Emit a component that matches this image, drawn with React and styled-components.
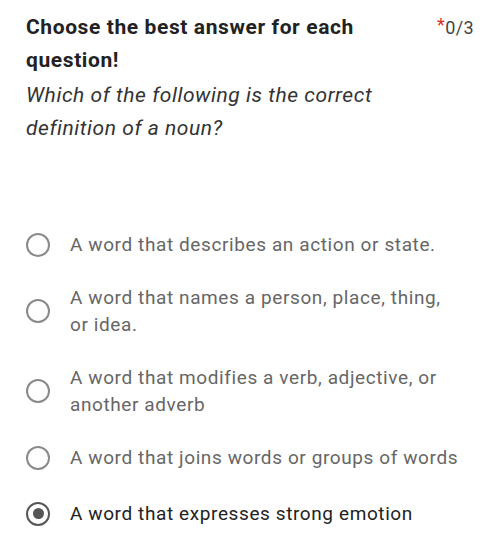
import { createGlobalStyle, styled } from "styled-components"

const GlobalStyle = createGlobalStyle`
  html, body {
    margin: 0;
    padding: 0;
    background: #ffffff;
  }
  body {
    font-family: Roboto, "Liberation Sans", Arial, sans-serif;
  }
`

const options = [
  "A word that describes an action or state.",
  "A word that names a person, place, thing, or idea.",
  "A word that modifies a verb, adjective, or another adverb",
  "A word that joins words or groups of words",
  "A word that expresses strong emotion",
]

const selected = 4

function App() {
  return (
    <>
      <GlobalStyle />
      <Card>
        <Header>
          <Title>Choose the best answer for each question!</Title>
          <Score>
            <Star>*</Star>0/3
          </Score>
        </Header>
        <Question>Which of the following is the correct definition of a noun?</Question>
        <OptionList>
          {options.map((text, i) => (
            <Option key={text} $checked={i === selected}>
              <Radio $checked={i === selected}>{i === selected && <Dot />}</Radio>
              <OptionText $checked={i === selected}>{text}</OptionText>
            </Option>
          ))}
        </OptionList>
      </Card>
    </>
  )
}

export default App

const Card = styled.div`
  width: 501px;
  height: 556px;
  box-sizing: border-box;
  padding: 11px 27px 0 26px;
  background: #ffffff;
  overflow: hidden;
`

const Header = styled.div`
  display: flex;
  justify-content: space-between;
  align-items: flex-start;
`

const Title = styled.div`
  width: 360px;
  font-size: 21px;
  font-weight: 700;
  letter-spacing: 0.6px;
  line-height: 33px;
  color: #222222;
`

const Score = styled.div`
  font-size: 18px;
  letter-spacing: 0.4px;
  line-height: 33px;
  color: #444444;
`

const Star = styled.span`
  color: #d93025;
  font-size: 18px;
  position: relative;
  top: -3px;
`

const Question = styled.div`
  width: 380px;
  margin-top: 2px;
  font-size: 21px;
  font-style: italic;
  letter-spacing: 0.55px;
  line-height: 33px;
  color: #333333;
`

const OptionList = styled.div`
  display: flex;
  flex-direction: column;
  gap: 26px;
  margin-top: 86px;
`

const Option = styled.div`
  display: flex;
  align-items: center;
  gap: 20px;
  margin-top: ${props => (props.$checked ? "3px" : "0")};
`

const Radio = styled.div`
  flex: none;
  display: flex;
  align-items: center;
  justify-content: center;
  width: 20px;
  height: 20px;
  border-radius: 50%;
  border: 2px solid ${props => (props.$checked ? "#555555" : "#8a8a8a")};
`

const Dot = styled.div`
  width: 11px;
  height: 11px;
  border-radius: 50%;
  background: #555555;
`

const OptionText = styled.div`
  width: 390px;
  font-size: 19px;
  letter-spacing: 0.6px;
  line-height: 27px;
  color: ${props => (props.$checked ? "#222222" : "#666666")};
`
